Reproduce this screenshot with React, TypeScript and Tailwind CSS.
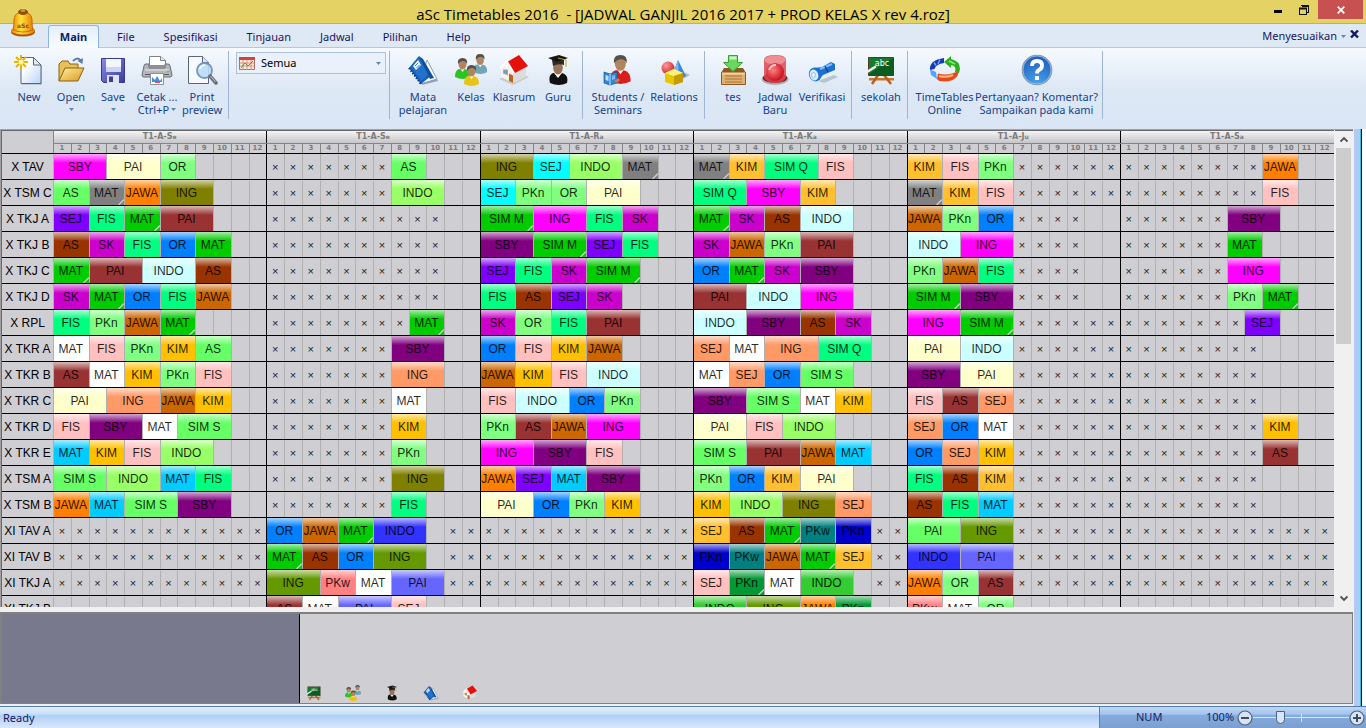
import React, { useState } from "react";

const UI = "font-['Noto_Sans','Open_Sans',sans-serif]";

/* ---------- timetable data ---------- */

const COLORS: Record<string, string> = {
  m: "bg-[#ff00ff]", p: "bg-[#800080]", c: "bg-[#ffffcc]", G: "bg-[#80ff80]", g: "bg-[#66ff66]",
  y: "bg-[#808080]", o: "bg-[#ff8000]", v: "bg-[#808000]", V: "bg-[#8000ff]", s: "bg-[#00ff80]",
  k: "bg-[#00cc00]", b: "bg-[#993333]", B: "bg-[#993300]", M: "bg-[#cc00cc]", U: "bg-[#0080ff]",
  i: "bg-[#ccffff]", J: "bg-[#cc6600]", w: "bg-white", r: "bg-[#ffc0c0]", K: "bg-[#ffc000]",
  l: "bg-[#99ff66]", C: "bg-[#00ffff]", A: "bg-[#ffc030]", S: "bg-[#ff9966]", T: "bg-[#00ccff]",
  N: "bg-[#3333ff]", O: "bg-[#669900]", R: "bg-[#ff8080]", P: "bg-[#6666ff]", t: "bg-[#008080]",
  D: "bg-[#0000cc]", E: "bg-[#009933]", F: "bg-[#33cc33]",
};

const DAYS = ["Se", "Se", "Ra", "Ka", "Ju", "Sa"];
const PERIODS = [1, 2, 3, 4, 5, 6, 7, 8, 9, 10, 11, 12];

/* Vertical rules are inset shadows, so that the black row rules run through unbroken. */
const DAY_RULE = "shadow-[inset_1px_0_0_#000]";
const PERIOD_RULE = "shadow-[inset_1px_0_0_#b0b0b0]";
const HEAD_RULE = "shadow-[inset_1px_0_0_#858585]";

/* Each day is a list of "subject:colour+length" lessons, "x" blocked runs and "." free runs; * marks a shared lesson. */
const ROWS: [string, string][] = [
  ["X TAV", "SBY:m3,PAI:c3,OR:G2,.4|x7,AS:g2,.3|ING:v3,SEJ:C2,INDO:l3,MAT:y2*,.2|MAT:y2*,KIM:A2,SIM Q:s3,FIS:r2,.3|KIM:A2,FIS:r2,PKn:G2,x6|x8,JAWA:o2,.2"],
  ["X TSM C", "AS:g2,MAT:y2*,JAWA:o2,ING:v3,.3|x7,INDO:l3,.2|SEJ:C2,PKn:G2,OR:G2,PAI:c3,.3|SIM Q:s3,SBY:m3,KIM:A2,.4|MAT:y2*,KIM:A2,FIS:r2,x6|x8,FIS:r2,.2"],
  ["X TKJ A", "SEJ:V2,FIS:s2,MAT:k2*,PAI:b3,.3|x10,.2|SIM M:k3*,ING:m3,FIS:s2,SK:M2,.2|MAT:k2*,SK:M2,AS:B2,INDO:i3,.3|JAWA:J2,PKn:G2,OR:U2,x4,.2|x6,SBY:p3,.3"],
  ["X TKJ B", "AS:B2,SK:M2,FIS:s2,OR:U2,MAT:k2,.2|x10,.2|SBY:p3,SIM M:k3*,SEJ:V2,FIS:s2,.2|SK:M2,JAWA:J2,PKn:G2,PAI:b3,.3|INDO:i3,ING:m3,x4,.2|x6,MAT:k2,.4"],
  ["X TKJ C", "MAT:k2*,PAI:b3,INDO:i3,AS:B2,.2|x10,.2|SEJ:V2,FIS:s2,SK:M2,SIM M:k3*,.3|OR:U2,MAT:k2*,SK:M2,SBY:p3,.3|PKn:G2,JAWA:J2,FIS:s2,x4,.2|x6,ING:m3,.3"],
  ["X TKJ D", "SK:M2,MAT:k2*,OR:U2,FIS:s2,JAWA:J2,.2|x10,.2|FIS:s2,AS:B2,SEJ:V2,SK:M2,.4|PAI:b3,INDO:i3,ING:m3,.3|SIM M:k3*,SBY:p3,x4,.2|x6,PKn:G2,MAT:k2*,.2"],
  ["X RPL", "FIS:s2,PKn:G2,JAWA:J2,MAT:k2*,.4|x8,MAT:k2*,.2|SK:M2,OR:G2,FIS:s2,PAI:b3,.3|INDO:i3,SBY:p3,AS:B2,SK:M2,.2|ING:m3,SIM M:k3*,x6|x7,SEJ:V2,.3"],
  ["X TKR A", "MAT:w2,FIS:r2,PKn:G2,KIM:K2,AS:g2,.2|x7,SBY:p3,.2|OR:U2,FIS:r2,KIM:K2,JAWA:J2,.4|SEJ:S2,MAT:w2,ING:S3,SIM Q:s3,.2|PAI:c3,INDO:i3,x6|x8,.4"],
  ["X TKR B", "AS:b2,MAT:w2,KIM:K2,PKn:G2,FIS:r2,.2|x7,ING:S3,.2|JAWA:J2,KIM:K2,FIS:r2,INDO:i3,.3|MAT:w2,SEJ:S2,OR:U2,SIM S:g3,.3|SBY:p3,PAI:c3,x6|x8,.4"],
  ["X TKR C", "PAI:c3,ING:S3,JAWA:J2,KIM:K2,.2|x7,MAT:w2,.3|FIS:r2,INDO:i3,OR:U2,PKn:G2,.3|SBY:p3,SIM S:g3,MAT:w2,KIM:K2,.2|FIS:r2,AS:b2,SEJ:S2,x6|x8,.4"],
  ["X TKR D", "FIS:r2,SBY:p3,MAT:w2,SIM S:g3,.2|x7,KIM:K2,.3|PKn:G2,AS:b2,JAWA:J2,ING:m3,.3|PAI:c3,FIS:r2,INDO:l3,.4|SEJ:S2,OR:U2,MAT:w2,x6|x8,KIM:K2,.2"],
  ["X TKR E", "MAT:T2,KIM:K2,FIS:r2,INDO:l3,.3|x7,PKn:G2,.3|ING:m3,SBY:p3,FIS:r2,.4|SIM S:g3,PAI:b3,JAWA:J2,MAT:T2,.2|OR:U2,SEJ:S2,KIM:K2,x6|x8,AS:b2,.2"],
  ["X TSM A", "SIM S:g3,INDO:l3,MAT:T2,FIS:s2,.2|x7,ING:v3,.2|JAWA:o2,SEJ:V2,MAT:T2,SBY:p3,.3|PKn:G2,OR:U2,KIM:A2,PAI:c3,.3|FIS:s2,AS:B2,KIM:A2,x6|x8,.4"],
  ["X TSM B", "JAWA:o2,MAT:T2,SIM S:g3,SBY:p3,.2|x7,FIS:s2,.3|PAI:c3,OR:U2,PKn:G2,KIM:K2,.3|KIM:K2,INDO:l3,ING:v3,SEJ:S2,.2|AS:B2,FIS:s2,MAT:T2,x6|x8,.4"],
  ["XI TAV A", "x12|OR:U2,JAWA:J2,MAT:k2*,INDO:N3,.1,x2|x12|SEJ:A2,AS:B2,MAT:k2*,PKw:t2,PKn:D2,x2|PAI:g3,ING:O3,x6|x12"],
  ["XI TAV B", "x12|MAT:k2*,AS:B2,OR:U2,ING:O3,.1,x2|x12|PKn:D2,PKw:t2,JAWA:J2,MAT:k2*,SEJ:A2,x2|INDO:N3,PAI:P3,x6|x12"],
  ["XI TKJ A", "x12|ING:O3,PKw:R2,MAT:w2,PAI:P3,x2|x12|SEJ:r2,PKn:E2*,MAT:w2,INDO:F3,.1,x2|JAWA:o2,OR:G2,AS:b2,x6|x12"],
  ["XI TKJ B", "x12|AS:b2,MAT:w2,PAI:P3,SEJ:r2,.1,x2|x12|INDO:F3,ING:O3,JAWA:o2,PKn:E2,x2|PKw:R2,MAT:w2,OR:G2,x6|x12"],
];

function Lesson({ token, first }: { token: string; first: boolean }) {
  if (token[0] === "x" || token[0] === ".") {
    const cells = Array.from({ length: Number(token.slice(1)) });
    return (
      <>
        {cells.map((_, i) => (
          <td
            key={i}
            className={`h-[26px] border-b border-black p-0 text-center text-[11px] leading-4 text-[#222] ${first && i === 0 ? DAY_RULE : PERIOD_RULE}`}
          >
            {token[0] === "x" ? "×" : ""}
          </td>
        ))}
      </>
    );
  }
  const [subject, spec] = token.split(":");
  return (
    <td
      colSpan={Number(spec[1])}
      className={`relative h-[26px] overflow-hidden border-b border-black bg-[linear-gradient(to_bottom,rgba(255,255,255,0.65),rgba(255,255,255,0)_9px)] p-0 text-center text-xs leading-4 whitespace-nowrap text-black/85 ${first ? DAY_RULE : PERIOD_RULE} ${COLORS[spec[0]]}`}
    >
      {subject}
      {spec.endsWith("*") && (
        <svg className="absolute right-0 bottom-0" width="6" height="6" viewBox="0 0 6 6">
          <path d="M0.5 6 6 0.5" stroke="#d0d0d0" strokeWidth="1.3" />
        </svg>
      )}
    </td>
  );
}

function Timetable() {
  return (
    <table className="w-full table-fixed border-separate border-spacing-0 bg-[#cfced3] font-['Liberation_Sans',Arial,sans-serif]">
      <colgroup>
        <col className="w-[51px]" />
        {DAYS.flatMap((_, d) => PERIODS.map((p) => <col key={`${d}-${p}`} />))}
      </colgroup>
      <thead className="font-['DejaVu_Sans',sans-serif] text-[#7b7b7b]">
        <tr>
          <td rowSpan={2} className="border-b border-black p-0" />
          {DAYS.map((d, i) => (
            <th
              key={i}
              colSpan={12}
              className={`h-[13px] border-b border-[#858585] bg-linear-to-b from-[#f4f4f6] to-[#c6c6ca] p-0 text-center text-[8px] leading-3 font-bold ${i ? DAY_RULE : HEAD_RULE}`}
            >
              T1-A-{d[0]}<span className="text-[6px]">{d[1]}</span>
            </th>
          ))}
        </tr>
        <tr>
          {DAYS.flatMap((_, d) =>
            PERIODS.map((p) => (
              <th
                key={`${d}-${p}`}
                className={`h-[10px] border-b border-black p-0 text-center text-[7px] leading-[9px] font-bold ${d && p === 1 ? DAY_RULE : HEAD_RULE}`}
              >
                {p}
              </th>
            )),
          )}
        </tr>
      </thead>
      <tbody>
        {ROWS.map(([name, plan]) => (
          <tr key={name}>
            <th className="h-[26px] border-b border-black p-0 text-center text-xs leading-4 font-normal whitespace-nowrap text-black">{name}</th>
            {plan.split("|").map((day, d) =>
              day.split(",").map((token, i) => <Lesson key={`${d}-${i}`} token={token} first={i === 0 && d > 0} />),
            )}
          </tr>
        ))}
      </tbody>
    </table>
  );
}

/* ---------- icons ---------- */

function Icon({ small, children }: { small?: boolean; children: React.ReactNode }) {
  return (
    <svg className={small ? "size-4" : "size-8"} viewBox="0 0 32 32" aria-hidden="true">
      {children}
    </svg>
  );
}

type IconProps = { small?: boolean };

const NewIcon = (p: IconProps) => (
  <Icon {...p}>
    <defs><linearGradient id="page" x1="0" y1="0" x2="1" y2="1"><stop offset=".3" stopColor="#fff" /><stop offset="1" stopColor="#b8d4fa" /></linearGradient></defs>
    <path d="M9 4h12l8 8v19H9z" fill="#9aa" opacity=".5" />
    <path d="M8 3.500h12.500l7.500 7.500v18.500H8z" fill="url(#page)" stroke="#5a6675" />
    <path d="M20.500 3.500v7.500H28z" fill="#e4ecf6" stroke="#5a6675" />
    <path d="M8 1v14M1 8h14M3 3l10 10M13 3 3 13" stroke="#e8b400" strokeWidth="2" />
    <circle cx="8" cy="8" r="2.600" fill="#fff7a8" />
  </Icon>
);
const OpenIcon = (p: IconProps) => (
  <Icon {...p}>
    <defs><linearGradient id="fold" x1="0" y1="0" x2="1" y2="1"><stop stopColor="#fff0a0" /><stop offset="1" stopColor="#d89a20" /></linearGradient></defs>
    <path d="M4 27V10l3-3h6l2 3h8v5" fill="#e8bf58" stroke="#8b6310" />
    <path d="M4 27 10 14h19l-6 13z" fill="url(#fold)" stroke="#8b6310" />
    <path d="M18 7q5-5 8 0" fill="none" stroke="#5c7fa8" strokeWidth="1.800" />
    <path d="m28 4-.5 6-5-3z" fill="#5c7fa8" />
  </Icon>
);
const SaveIcon = (p: IconProps) => (
  <Icon {...p}>
    <defs><linearGradient id="disk" x1="0" y1="0" x2="1" y2="1"><stop stopColor="#8b8bea" /><stop offset="1" stopColor="#3a3a9c" /></linearGradient></defs>
    <path d="M4.500 4.500h23v24h-21l-2-2z" fill="url(#disk)" stroke="#39398c" />
    <path d="M9 5h15v13H9z" fill="#f4f6ff" />
    <path d="M9 13h15v5H9z" fill="#ccd4f4" />
    <path d="M10 21h12v8H10z" fill="#dfe3f0" />
    <path d="M12 22.500h4V28h-4z" fill="#3d3f8c" />
  </Icon>
);
const PrintIcon = (p: IconProps) => (
  <Icon {...p}>
    <path d="M8.500 13V2.500h11l5 4V13" fill="#fff" stroke="#7c8087" />
    <path d="M19.500 2.500v4h5" fill="#dfe8f4" stroke="#7c8087" />
    <path d="M3 12q0-2 2-2h3v4h16v-4h3q2 0 2 2l2 9q0 2-2 2H3q-2 0-2-2z" fill="#b3b6bb" stroke="#6a6d73" />
    <path d="M8 11h16v3H8z" fill="#8c8f95" />
    <path d="M4 16h24" stroke="#d8d9dc" strokeWidth="1.500" />
    <path d="M4 20h24v1H4z" fill="#55585e" />
    <circle cx="27" cy="17.500" r="1" fill="#5c5" />
    <path d="M9.500 19.500h13v11h-13z" fill="#fff" stroke="#8b9098" />
    <path d="M11 28v-5l3 3 2-4 3 5 2-3v4z" fill="#3f8fdd" />
    <path d="M14 28h5v1h-5z" fill="#e45" />
  </Icon>
);
const PreviewIcon = (p: IconProps) => (
  <Icon {...p}>
    <path d="M2.500 2.500h14l6 6v21h-20z" fill="#f6faff" stroke="#5a6675" />
    <path d="M16.500 2.500v6h6" fill="#dce8f6" stroke="#5a6675" />
    <circle cx="18.500" cy="16.500" r="7.500" fill="#bcdcf8" fillOpacity=".9" stroke="#7397bd" strokeWidth="1.800" />
    <path d="M14 15q1-4 5-4" stroke="#fff" strokeWidth="1.500" fill="none" />
    <path d="m24 22 6 7" stroke="#666d77" strokeWidth="3.500" strokeLinecap="round" />
    <path d="m24.500 22 5 6" stroke="#c5c9cf" strokeWidth="1" />
  </Icon>
);
const BookIcon = (p: IconProps) => (
  <Icon {...p}>
    <path d="m15 31 16-4-9-18-5 2z" fill="#8ba2bd" />
    <path d="m13 30 17-5L20 6z" fill="#f8fbff" stroke="#7b90aa" strokeWidth=".800" />
    <path d="M2 14 12 2l12 20-10 8z" fill="#1660b8" />
    <path d="M12 2l4 3 11 19-4 1z" fill="#0f4f9e" />
    <path d="M5 13 12 4l9 17-7 6z" fill="#2272cc" />
    <path d="m2 14 12 16" stroke="#0c3c7c" strokeWidth="2.200" strokeDasharray="1.500 1.500" />
    <path d="m6 12 5-6 3 5-5 5z" fill="#e8f2ff" />
    <path d="m8 12 3-3M9.500 14l3-3" stroke="#1660b8" strokeWidth=".800" />
  </Icon>
);

function Person({ x, y, shirt, s = 1 }: { x: number; y: number; shirt: string; s?: number }) {
  return (
    <g transform={`translate(${x} ${y}) scale(${s})`}>
      <path d="M0 19q0-7 4-8h6q5 1 5 8-7 4-15 0z" fill={shirt} />
      <path d="m5 10 2.500 4 3-4z" fill="#fff" />
      <ellipse cx="7.500" cy="6" rx="4" ry="5.500" fill="#b08560" />
      <path d="M3 6q-1-6 4.500-6T12 6q-1-3-4-3T3 6z" fill="#54504c" />
    </g>
  );
}
const GroupIcon = (p: IconProps) => (
  <Icon {...p}>
    <Person x={18} y={0} shirt="#6ea6b8" s={0.95} />
    <Person x={0} y={4} shirt="#2cc424" />
    <Person x={9} y={11} shirt="#e8c418" />
  </Icon>
);
const HouseIcon = (p: IconProps) => (
  <Icon {...p}>
    <path d="M1 25 15 31l16-8-14-5z" fill="#c9c9c9" />
    <path d="M3 13v10l12 6V18L9 8z" fill="#f4f4f4" />
    <path d="m15 29 13-6V12l-13 3z" fill="#dcdcdc" />
    <path d="M9 8 21 1l9 11-13 7z" fill="#e6100a" />
    <path d="M2 14 9 7l7 12" fill="none" stroke="#fff" strokeWidth="1.500" />
    <path d="M5 15.500h5v6l-5-2z" fill="#e89a40" /><path d="M6 16.500h3v3.500l-3-1z" fill="#59a2e0" />
    <path d="M11 19.500l4 2v7.500l-4-2z" fill="#b8641c" />
  </Icon>
);
const GradIcon = (p: IconProps) => (
  <Icon {...p}>
    <path d="M8 29q-2-8 3-10h9q7 2 5 10-8 4-17 0z" fill="#101010" />
    <path d="m12 19 4 5 4-5z" fill="#fff" />
    <ellipse cx="16" cy="14" rx="4.800" ry="6.500" fill="#9a7455" />
    <path d="M10 6h12v5q-6-2-11 1z" fill="#2b2b2b" />
    <path d="M6 4 17 1l9 3-11 4z" fill="#151515" />
    <path d="m16 4 8 2v7" stroke="#caa020" fill="none" />
  </Icon>
);
const StudentIcon = (p: IconProps) => (
  <Icon {...p}>
    <g transform="translate(8 1) scale(1.380)"><Person x={0} y={0} shirt="#d91c1c" /></g>
    <path d="m2 18 6 2 7-2v11l-7 2-6-2z" fill="#2f86d2" stroke="#1a5592" strokeWidth=".700" />
    <path d="M8 20v11" stroke="#c9e4ff" />
    <path d="m3.500 21 3 1v5l-3-1z" fill="#bfe0ff" /><path d="m10 22 3-1v4l-3 1z" fill="#76bdf4" />
    <path d="m12 27 4-3 2 2-3 3z" fill="#b08560" />
  </Icon>
);
const ShapesIcon = (p: IconProps) => (
  <Icon {...p}>
    <path d="m14 24 14-5 4 2-14 8z" fill="#7b8797" opacity=".5" />
    <defs><radialGradient id="ball" cx=".35" cy=".3" r=".8"><stop stopColor="#ff9a9a" /><stop offset="1" stopColor="#c81616" /></radialGradient></defs>
    <circle cx="10" cy="14" r="6.500" fill="url(#ball)" />
    <path d="m20 6 8 16q-6 4-14 0z" fill="#3a86dc" /><path d="m20 6 1 17-7-1z" fill="#77b4f4" />
    <path d="m7 19 9-4 9 4v9l-9 3-9-3z" fill="#e8c600" />
    <path d="m7 19 9-4 9 4-9 3z" fill="#fff27a" /><path d="m16 22 9-3v9l-9 3z" fill="#c49c00" />
  </Icon>
);
const CrateIcon = (p: IconProps) => (
  <Icon {...p}>
    <path d="m7 14-3 5h25l-3-5z" fill="#8b5a24" />
    <path d="M4.500 18.500h24v12h-24z" fill="#e0b06c" stroke="#8b5a24" />
    <path d="M8 22h17M8 25h17M8 28h17" stroke="#a8713a" />
    <path d="M5 18.500h23v2H5z" fill="#f4d29c" />
    <path d="M11.500 1.500h9v7h5l-9.500 9-9.500-9h5z" fill="#6ad85c" stroke="#38a030" />
    <path d="M12.500 2.500h7v3h-7z" fill="#c8f8c0" />
  </Icon>
);
const SirenIcon = (p: IconProps) => (
  <Icon {...p}>
    <defs><radialGradient id="lamp" cx=".4" cy=".4" r=".7"><stop stopColor="#ff8080" /><stop offset="1" stopColor="#c00010" /></radialGradient></defs>
    <ellipse cx="16" cy="25" rx="13.500" ry="6" fill="#a8adb2" /><ellipse cx="16" cy="24" rx="12" ry="5" fill="#7a0810" />
    <path d="M5 6q0-5 11-5t11 5v18q-3 5-11 5T5 24z" fill="#dd4950" opacity=".85" />
    <ellipse cx="16" cy="6" rx="10.500" ry="4.500" fill="#ef8f92" />
    <circle cx="16" cy="18" r="9" fill="url(#lamp)" /><path d="M10 16q2-5 7-5" stroke="#ffd0d0" strokeWidth="2" fill="none" />
  </Icon>
);
const TorchIcon = (p: IconProps) => (
  <Icon {...p}>
    <path d="m12 27 16-6 4 2-14 6z" fill="#7b8797" opacity=".4" />
    <path d="m8 14 8-1 9-5 4 2v6l-12 5-4 5z" fill="#1d6fd0" />
    <path d="m14 15 12-5" stroke="#7fc0ff" strokeWidth="2" />
    <path d="m19 12 3 6" stroke="#0f4896" strokeWidth="1.500" />
    <ellipse cx="9" cy="20.500" rx="6" ry="7" fill="#1d6fd0" transform="rotate(-20 9 20.500)" />
    <ellipse cx="8" cy="21" rx="4.200" ry="5.500" fill="#d4ecff" transform="rotate(-20 8 21)" />
    <ellipse cx="7.500" cy="21" rx="1.800" ry="2.500" fill="#fff" stroke="#78a8d8" strokeWidth=".800" />
  </Icon>
);
const BoardIcon = (p: IconProps) => (
  <Icon {...p}>
    <path d="M4 24h25v2.500H4z" fill="#c8782c" />
    <path d="m13 21-6 9M19 21l7 9" stroke="#b5601c" strokeWidth="2.500" />
    <path d="M3.500 3.500h25v18h-25z" fill="#0a5c20" stroke="#4c3b22" />
    <path d="M4 4h24L4 20z" fill="#1f8c3c" opacity=".6" />
    <text x="17" y="12" fontSize="8" textAnchor="middle" fontFamily="DejaVu Sans" fill="#fff">abc</text>
    <path d="m2 18 8-5" stroke="#f2f2f2" strokeWidth="2.500" strokeLinecap="round" />
  </Icon>
);
const SyncIcon = (p: IconProps) => (
  <Icon {...p}>
    <path d="M15 4v5Q7 10 5.500 15L1 16Q0 6 15 4z" fill="#1438b8" />
    <path d="M11 5.500 9 10M5 8.500l2 3" stroke="#6ca4f4" strokeWidth="1.500" />
    <path d="M1 15.500 7 18l1 7-6-4z" fill="#52a2ff" />
    <path d="m15 8 7-6v3q9 2 9 10l-1 4-4-1q2-6-4-7v3z" fill="#2cb020" />
    <path d="m20 7 6 3" stroke="#8ce87c" strokeWidth="1.500" />
    <path d="M9 19.500q7 2 14 0l6-2q1 3-2 6-4 4-11 4T8 25z" fill="#e84818" />
    <path d="M10 22q7 2 14-1" stroke="#ffb478" strokeWidth="2" fill="none" />
  </Icon>
);
const HelpIcon = (p: IconProps) => (
  <Icon {...p}>
    <defs><radialGradient id="help" cx=".5" cy="1" r="1"><stop stopColor="#49a6f2" /><stop offset="1" stopColor="#1c5cb8" /></radialGradient></defs>
    <circle cx="16" cy="16" r="14.700" fill="url(#help)" stroke="#8a98a8" strokeWidth="1.300" />
    <circle cx="16" cy="16" r="14" fill="none" stroke="#a8c8ee" strokeWidth=".700" />
    <path d="M11 12q0-5 5-5t5 4.500q0 3-3 4.500-2 1-2 3.500" fill="none" stroke="#fff" strokeWidth="3.800" />
    <path d="M14 22h4v4h-4z" fill="#fff" />
  </Icon>
);

function BellLogo() {
  return (
    <svg width="26" height="32" viewBox="0 0 26 32" role="img" aria-label="aSc">
      <defs><linearGradient id="bell"><stop stopColor="#f08a00" /><stop offset=".4" stopColor="#ffe23c" /><stop offset="1" stopColor="#e87c00" /></linearGradient></defs>
      <ellipse cx="13" cy="24" rx="12" ry="4.500" fill="#b85008" />
      <ellipse cx="13" cy="22.500" rx="12" ry="4" fill="url(#bell)" />
      <path d="M3 22Q4 18 4 11q1-7 9-7t9 7q0 7 1 11-10 4-20 0z" fill="url(#bell)" stroke="#b86008" strokeWidth=".800" />
      <ellipse cx="13" cy="4" rx="5" ry="3" fill="#8c500c" /><ellipse cx="13" cy="2.500" rx="2.500" ry="1.500" fill="#d89030" />
      <text x="13" y="20" fontSize="6" textAnchor="middle" fontFamily="DejaVu Sans" fontWeight="bold" fill="#9a4a08">aSc</text>
    </svg>
  );
}

function CalendarIcon() {
  return (
    <svg width="16" height="13" viewBox="0 0 16 13" aria-hidden="true">
      <path d="M.5.5h15v12H.5z" fill="#fbeee0" stroke="#b07068" />
      <path d="M0 0h16v3H0z" fill="#d84038" />
      <path d="M1 6h14M1 9h14M4 3v10M8 3v10M12 3v10" stroke="#dc9080" />
      <path d="m2 11 4-5 3 3 5-5" stroke="#58963c" fill="none" />
    </svg>
  );
}

function Caret() {
  return (
    <svg className="inline-block" width="5" height="3" viewBox="0 0 5 3" aria-hidden="true">
      <path d="M0 0h5L2.500 3z" fill="#5b84b8" />
    </svg>
  );
}

/* ---------- ribbon ---------- */

type Item = { label: string; sub?: string; width: string; icon: (p: IconProps) => React.ReactElement; caret?: boolean };

const FILE_GROUP: Item[] = [
  { label: "New", width: "w-[42px]", icon: NewIcon },
  { label: "Open", width: "w-[42px]", icon: OpenIcon, caret: true },
  { label: "Save", width: "w-[42px]", icon: SaveIcon, caret: true },
  { label: "Cetak ...", sub: "Ctrl+P", width: "w-[46px]", icon: PrintIcon, caret: true },
  { label: "Print", sub: "preview", width: "w-[44px]", icon: PreviewIcon },
];
const DATA_GROUP: Item[] = [
  { label: "Mata", sub: "pelajaran", width: "w-[54px]", icon: BookIcon },
  { label: "Kelas", width: "w-[42px]", icon: GroupIcon },
  { label: "Klasrum", width: "w-[44px]", icon: HouseIcon },
  { label: "Guru", width: "w-[44px]", icon: GradIcon },
];
const STUDENT_GROUP: Item[] = [
  { label: "Students /", sub: "Seminars", width: "w-[60px]", icon: StudentIcon },
  { label: "Relations", width: "w-[52px]", icon: ShapesIcon },
];
const RUN_GROUP: Item[] = [
  { label: "tes", width: "w-[42px]", icon: CrateIcon },
  { label: "Jadwal", sub: "Baru", width: "w-[42px]", icon: SirenIcon },
  { label: "Verifikasi", width: "w-[52px]", icon: TorchIcon },
];
const SCHOOL_GROUP: Item[] = [{ label: "sekolah", width: "w-[50px]", icon: BoardIcon }];
const ONLINE_GROUP: Item[] = [
  { label: "TimeTables", sub: "Online", width: "w-[61px]", icon: SyncIcon },
  { label: "Pertanyaan? Komentar?", sub: "Sampaikan pada kami", width: "w-[123px]", icon: HelpIcon },
];

function Group({ items, pad }: { items: Item[]; pad: string }) {
  return (
    <div className={`mt-[3px] flex h-[68px] shrink-0 border-r border-[#9fb6d3] ${pad}`}>
      {items.map(({ label, sub, width, icon: Glyph, caret }) => (
        <button key={label} className={`flex shrink-0 flex-col items-center pt-[3px] text-[11px] leading-[13px] whitespace-nowrap text-[#15428b] ${width}`}>
          <Glyph />
          <span className="mt-1">{label}</span>
          <span className="flex h-[13px] items-center gap-0.5">
            {sub}
            {caret && <Caret />}
          </span>
        </button>
      ))}
    </div>
  );
}

const TABS = ["File", "Spesifikasi", "Tinjauan", "Jadwal", "Pilihan", "Help"];

export default function App() {
  const [zoom, setZoom] = useState(27);
  return (
    <div className={`flex h-screen flex-col overflow-hidden bg-[#f0f0f0] text-[11px] text-black ${UI}`}>
      <header className="relative shrink-0">
        <div className="flex h-6 items-start border-b border-[#c4b34c] bg-[#e4d364]">
          <h1 className="flex-1 pt-1 text-center font-['Open_Sans','Noto_Sans',sans-serif] text-[15px] leading-5 whitespace-pre">aSc Timetables 2016  - [JADWAL GANJIL 2016 2017 + PROD KELAS X rev 4.roz]</h1>
          <div className="absolute top-0 right-[3px] flex">
            <button aria-label="Minimize" className="flex h-[19px] w-6 items-center justify-center pt-1">
              <span className="h-[3px] w-2 bg-black" />
            </button>
            <button aria-label="Restore" className="flex h-[19px] w-7 items-center justify-center">
              <svg width="10" height="10" viewBox="0 0 10 10"><path d="M2 0h8v8H8V7h1V2H3V1H2zM0 2.500h8V10H0zM1 4.500V9h6V4.500z" fill="#111" fillRule="evenodd" /></svg>
            </button>
            <button aria-label="Close" className="flex h-[19px] w-[45px] items-center justify-center bg-[#c75050]">
              <svg width="8" height="8" viewBox="0 0 8 8"><path d="m.7.700 6.600 6.600m0-6.600L.7 7.300" stroke="#fff" strokeWidth="1.700" /></svg>
            </button>
          </div>
        </div>
        <div className="absolute top-2 left-[10px]"><BellLogo /></div>

        <nav className="flex h-6 items-end border-b border-[#b4c8e4] bg-[#dfe9f5] pl-12 text-[#15155f]">
          <button className="-mb-px h-[23px] w-[51px] rounded-t-[3px] border border-b-0 border-[#8fb4e4] bg-linear-to-b from-[#e4effb] to-[#f8fcff] font-bold text-[#0a2064]">Main</button>
          <div className="flex h-[23px] flex-1 gap-px pl-1">
            {TABS.map((t) => (
              <button key={t} className="px-[14px] pt-[3px]">{t}</button>
            ))}
          </div>
          <button className="flex h-[23px] items-center gap-1 pt-px">Menyesuaikan <Caret /></button>
          <button aria-label="Close window" className="ml-1 flex h-[23px] w-4 items-center pb-1">
            <svg width="9" height="8" viewBox="0 0 9 8"><path d="M1 .5 8 7.500M8 .5 1 7.500" stroke="#0c1c5c" strokeWidth="2.400" /></svg>
          </button>
        </nav>

        <div className="flex h-[81px] overflow-hidden bg-linear-to-b from-[#f6faff] via-[#dde8f5] via-50% to-[#dae6f5]">
          <Group items={FILE_GROUP} pad="pl-2 pr-1" />
          <div className="mt-[3px] h-[68px] shrink-0 border-r border-[#9fb6d3] pr-[3px] pl-[7px]">
            <div className="relative mt-px flex h-[22px] w-[150px] items-center border border-[#abc1de] bg-[#eaf1fa]">
              <span className="absolute left-0.5"><CalendarIcon /></span>
              <select aria-label="Semua" className="h-full w-full appearance-none bg-transparent pl-6 outline-none">
                <option>Semua</option>
              </select>
              <span className="pointer-events-none absolute right-1 flex"><Caret /></span>
            </div>
          </div>
          <Group items={DATA_GROUP} pad="pl-[6px] pr-0.5" />
          <Group items={STUDENT_GROUP} pad="pl-[5px] pr-1" />
          <Group items={RUN_GROUP} pad="pl-[7px] pr-[3px]" />
          <Group items={SCHOOL_GROUP} pad="pl-1 pr-px" />
          <Group items={ONLINE_GROUP} pad="pl-[6px] pr-1" />
        </div>
      </header>

      <div className="flex min-h-0 flex-1">
        <main className="flex min-w-0 flex-1 flex-col">
          <div className="flex min-h-0 flex-1 border-t border-l border-[#a0a0a0]">
            <div className="min-w-0 flex-1 overflow-hidden border-t border-l border-[#696969]">
              <Timetable />
            </div>
            <div className="ml-px flex w-[18px] flex-col items-center border-t border-[#696969] bg-[#f0f0f0] pr-px">
              <button aria-label="Scroll up" className="flex h-[17px] w-full items-center justify-center">
                <svg width="8" height="7" viewBox="0 0 8 7"><path d="M.5 5.500 4 2l3.500 3.500" fill="none" stroke="#505050" strokeWidth="1.900" /></svg>
              </button>
              <div className="h-[196px] w-[15px] bg-[#cdcdcd]" />
              <span className="flex-1" />
              <button aria-label="Scroll down" className="flex h-[17px] w-full items-center justify-center">
                <svg width="8" height="7" viewBox="0 0 8 7"><path d="M.5 1.500 4 5l3.500-3.500" fill="none" stroke="#505050" strokeWidth="1.900" /></svg>
              </button>
            </div>
          </div>

          <section className="mt-[5px] mb-0.5 flex h-[92px] shrink-0 border border-t-2 border-l-2 border-[#808080]">
            <div className="w-[297px] shrink-0 bg-[#79798e]" />
            <div className="flex flex-1 items-end gap-[23px] border-l border-black bg-[#cfced3] pb-0.5 pl-[6px]">
              <button aria-label="sekolah"><BoardIcon small /></button>
              <button aria-label="Kelas"><GroupIcon small /></button>
              <button aria-label="Guru"><GradIcon small /></button>
              <button aria-label="Mata pelajaran"><BookIcon small /></button>
              <button aria-label="Klasrum"><HouseIcon small /></button>
            </div>
          </section>
        </main>
        <div className="ml-px w-[6px] bg-[#b0caf0]" />
        <div className="w-px bg-[#20c8e8]" />
        <div className="w-px bg-black" />
        <div className="w-1 bg-white" />
      </div>

      <footer className="flex h-[22px] shrink-0 border-t border-[#567db0] text-[#15428b]">
        <div className="flex flex-1 items-center border-r border-[#5a80b8] bg-[linear-gradient(to_bottom,#e2eefd,#c8defa_35%,#adcdf6_38%,#dbe8fa)] pt-0.5 pl-[3px] text-[#15155f]">Ready</div>
        <div className="flex w-[266px] items-center bg-[linear-gradient(to_bottom,#c0d6f6,#a4c4ee_35%,#86abe0_38%,#7a9fd0)] pl-9 text-[#15255f]">
          <span className="w-[70px]">NUM</span>
          <span className="w-[31px]">100%</span>
          <button aria-label="Zoom out" className="shrink-0">
            <svg className="block" width="16" height="16" viewBox="0 0 16 16"><circle cx="8" cy="8" r="7" fill="#d8e4f2" stroke="#51647e" strokeWidth="1.200" /><path d="M4 8h8" stroke="#3c4c64" strokeWidth="2" /></svg>
          </button>
          <div className="relative flex flex-1 items-center">
            <span className="absolute left-1/2 h-2 w-px bg-[#d4e4fa]" />
            <input
              type="range"
              aria-label="Zoom"
              value={zoom}
              onChange={(e) => setZoom(Number(e.target.value))}
              className="relative h-4 w-full min-w-0 appearance-none bg-[linear-gradient(#d4e4fa,#d4e4fa)] bg-[length:100%_1px] bg-center bg-no-repeat [&::-webkit-slider-thumb]:h-[13px] [&::-webkit-slider-thumb]:w-[9px] [&::-webkit-slider-thumb]:appearance-none [&::-webkit-slider-thumb]:rounded-b-[5px] [&::-webkit-slider-thumb]:border [&::-webkit-slider-thumb]:border-[#4a6488] [&::-webkit-slider-thumb]:bg-[#d8e6f8]"
            />
          </div>
          <button aria-label="Zoom in" className="mr-px shrink-0">
            <svg className="block" width="16" height="16" viewBox="0 0 16 16"><circle cx="8" cy="8" r="7" fill="#d8e4f2" stroke="#51647e" strokeWidth="1.200" /><path d="M4 8h8M8 4v8" stroke="#3c4c64" strokeWidth="2" /></svg>
          </button>
        </div>
      </footer>
    </div>
  );
}
